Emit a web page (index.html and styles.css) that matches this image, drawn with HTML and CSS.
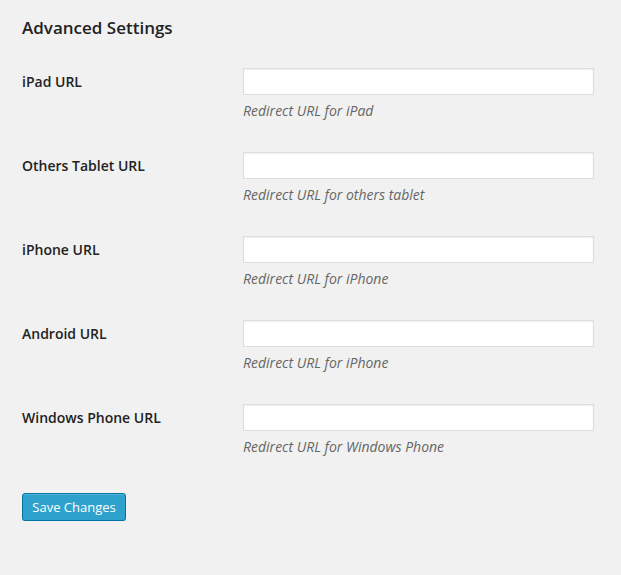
FILE: index.html
```html
<!DOCTYPE html>
<html>
<head>
  <title>Advanced Settings</title>
  <link rel="stylesheet" href="styles.css">
</head>
<body>
  <div class="wrap">
    <h3 class="section-title">Advanced Settings</h3>
    <form class="settings-form">
      <div class="form-row">
        <label class="form-label" for="ipad-url">iPad URL</label>
        <div class="form-field">
          <input class="text-input" type="text" id="ipad-url">
          <p class="description">Redirect URL for iPad</p>
        </div>
      </div>
      <div class="form-row">
        <label class="form-label" for="tablet-url">Others Tablet URL</label>
        <div class="form-field">
          <input class="text-input" type="text" id="tablet-url">
          <p class="description">Redirect URL for others tablet</p>
        </div>
      </div>
      <div class="form-row">
        <label class="form-label" for="iphone-url">iPhone URL</label>
        <div class="form-field">
          <input class="text-input" type="text" id="iphone-url">
          <p class="description">Redirect URL for iPhone</p>
        </div>
      </div>
      <div class="form-row">
        <label class="form-label" for="android-url">Android URL</label>
        <div class="form-field">
          <input class="text-input" type="text" id="android-url">
          <p class="description">Redirect URL for iPhone</p>
        </div>
      </div>
      <div class="form-row">
        <label class="form-label" for="winphone-url">Windows Phone URL</label>
        <div class="form-field">
          <input class="text-input" type="text" id="winphone-url">
          <p class="description">Redirect URL for Windows Phone</p>
        </div>
      </div>
      <div class="submit-row">
        <button type="button" class="button-primary">Save Changes</button>
      </div>
    </form>
  </div>
</body>
</html>
```

FILE: styles.css
```css
body {
  margin: 0;
  background: #f1f1f1;
  font-family: "Open Sans", sans-serif;
  color: #222;
  font-size: 13px;
}

.wrap {
  padding: 16px 22px 0 22px;
}

.section-title {
  margin: 0;
  font-size: 17px;
  font-weight: 600;
  line-height: 24px;
  color: #222;
}

.settings-form {
  margin-top: 28px;
}

.form-row {
  display: flex;
  height: 84px;
}

.form-label {
  width: 221px;
  flex-shrink: 0;
  padding-top: 4px;
  font-size: 14px;
  font-weight: 600;
  line-height: 20px;
  color: #222;
}

.form-field {
  width: 351px;
}

.text-input {
  display: block;
  box-sizing: border-box;
  width: 351px;
  height: 27px;
  margin: 0;
  border: 1px solid #ddd;
  box-shadow: inset 0 1px 2px rgba(0, 0, 0, 0.07);
  background: #fff;
  font-family: inherit;
}

.description {
  margin: 6px 0 0 0;
  font-size: 14px;
  font-style: italic;
  line-height: 20px;
  color: #666;
}

.submit-row {
  padding-top: 5px;
}

.button-primary {
  box-sizing: border-box;
  width: 104px;
  height: 28px;
  padding: 0 0 1px;
  border: 1px solid #0074a2;
  border-radius: 3px;
  background: #2ea2cc;
  box-shadow: inset 0 1px 0 rgba(120, 200, 230, 0.5), 0 1px 0 rgba(0, 0, 0, 0.15);
  color: #fff;
  font-family: inherit;
  font-size: 13px;
  line-height: 26px;
  white-space: nowrap;
  cursor: pointer;
}
```
